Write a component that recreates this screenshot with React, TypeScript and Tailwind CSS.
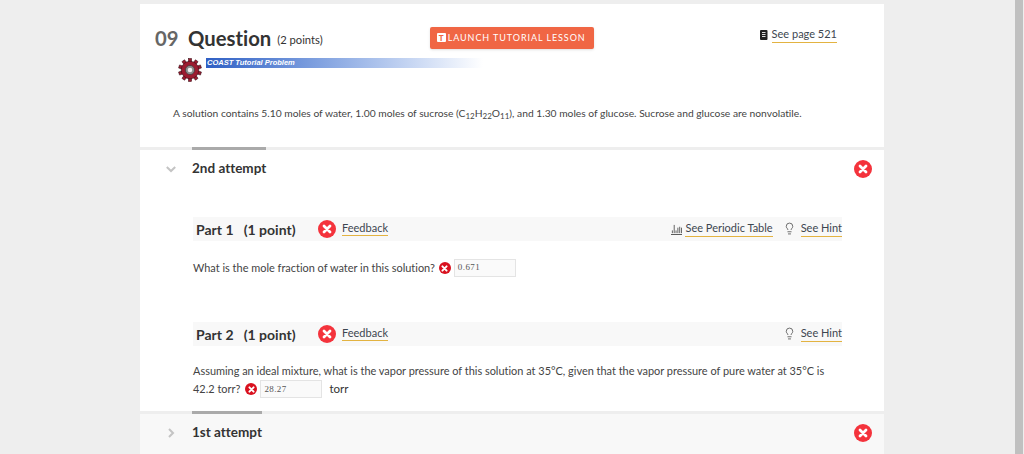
import React from 'react';
import { Lightbulb } from 'lucide-react';

const ErrorIcon = ({ size }: { size: 'lg' | 'sm' }) => (
    <span
        className={
            size === 'lg'
                ? 'flex h-[18px] w-[18px] shrink-0 items-center justify-center rounded-full bg-[#f4333c]'
                : 'flex h-3 w-3 shrink-0 items-center justify-center rounded-full bg-[#d9111f]'
        }
    >
        <svg viewBox="0 0 10 10" className={size === 'lg' ? 'h-[10px] w-[10px]' : 'h-[7px] w-[7px]'}>
            <path d="M2 2 L8 8 M8 2 L2 8" stroke="#fff" strokeWidth="2.8" strokeLinecap="round" />
        </svg>
    </span>
);

const Gear = () => (
    <svg viewBox="0 0 24 24" className="h-6 w-6 shrink-0">
        <g fill="#9c1c30" stroke="#2b0a10" strokeWidth="0.5">
            {[0, 36, 72, 108, 144, 180, 216, 252, 288, 324].map(a => (
                <rect key={a} x="10.4" y="0.5" width="3.2" height="5" transform={`rotate(${a} 12 12)`} />
            ))}
            <circle cx="12" cy="12" r="8.8" />
        </g>
        <circle cx="12" cy="12" r="4.6" fill="#8d8d8d" stroke="#333" strokeWidth="0.6" />
        <circle cx="12" cy="12" r="2.3" fill="#f2f2f2" />
    </svg>
);

const BookIcon = () => (
    <svg viewBox="0 0 8 10" className="h-[10px] w-2">
        <rect x="0" y="0" width="7.5" height="10" rx="1" fill="#222" />
        <path d="M2 2.5 H5.5 M2 4.5 H5.5 M2 6.5 H5.5" stroke="#ddd" strokeWidth="1" />
    </svg>
);

const BarsIcon = () => (
    <svg viewBox="0 0 12 12" className="h-[11px] w-[11px]">
        <path d="M0 11.5 H12" stroke="#444" strokeWidth="1" />
        <path d="M1.5 10 V7 M3.5 10 V1 M5.5 10 V7 M7.5 10 V4 M9.5 10 V3 M11.5 10 V4" stroke="#555" strokeWidth="1" />
    </svg>
);

const LinkText = ({ children }: { children: React.ReactNode }) => (
    <span className="border-b border-[#e3b341] pb-px text-[11px] leading-[14px] text-[#3d4650]">{children}</span>
);

const AnswerBox = ({ value }: { value: string }) => (
    <span className="ml-[3px] inline-flex h-[18px] w-[62px] items-center border border-[#e4e4e4] bg-[#fafafa] pl-[3px] font-['Liberation_Serif',serif] text-[9px] tracking-[0.4px] text-[#555]">
        {value}
    </span>
);

const PartHeader = ({ title, children }: { title: string; children: React.ReactNode }) => (
    <div className="flex h-6 items-center bg-[#f8f8f8] pl-[3px]">
        <span className="w-[122px] whitespace-pre text-[14px] font-bold text-[#333]">{title}</span>
        <ErrorIcon size="lg" />
        <span className="ml-[6px] -mt-[6px]">
            <LinkText>Feedback</LinkText>
        </span>
        <div className="ml-auto flex items-center">{children}</div>
    </div>
);

const HintLink = () => (
    <span className="flex items-center -mt-[1px]">
        <Lightbulb size={13} strokeWidth={1.4} className="mr-[5px] text-[#444]" />
        <LinkText>See Hint</LinkText>
    </span>
);

export default function App() {
    return (
        <div className="flex h-[454px] overflow-hidden bg-[#eeeeee] pt-[4px] font-['Lato','Open_Sans',sans-serif] [font-variant-ligatures:none]">
            <main className="ml-[140px] h-full w-[744px] shrink-0 bg-white">
                {/* Question header */}
                <section className="h-[143px] pl-[15px] pr-[47px] pt-[21px]">
                    <div className="flex h-[26px] items-center">
                        <span className="w-[33px] text-[20.3px] font-bold text-[#666]">09</span>
                        <span className="text-[20.3px] font-bold text-[#333]">Question</span>
                        <span className="ml-[6px] mt-[4px] text-[11.2px] text-[#333]">(2 points)</span>
                        <button className="ml-[107px] mt-[-1px] flex h-[22px] w-[164px] items-center rounded-[2px] bg-[#f06644] pl-[7px] text-[9px] tracking-[0.92px] text-white shadow-sm">
                            <span className="mr-[2px] flex h-[9px] w-[9px] items-center justify-center rounded-[1px] bg-white text-[8px] font-black leading-none tracking-normal text-[#f06644]">
                                T
                            </span>
                            LAUNCH TUTORIAL LESSON
                        </button>
                        <div className="ml-auto mb-[6px] flex items-center gap-[4px]">
                            <BookIcon />
                            <LinkText>See page 521</LinkText>
                        </div>
                    </div>
                    <div className="ml-[23px] mt-[7px] flex items-start">
                        <Gear />
                        <div className="ml-[4px] h-[10px] w-[277px] bg-gradient-to-r from-[#2f5fc4] to-white pl-[1px] font-['Liberation_Sans',sans-serif] text-[7.5px] font-bold italic leading-[9px] text-white">
                            COAST Tutorial Problem
                        </div>
                    </div>
                    <p className="ml-[18px] mt-[24px] whitespace-nowrap text-[10.27px] leading-[14px] text-[#444]">
                        A solution contains 5.10 moles of water, 1.00 moles of sucrose (C
                        <sub className="text-[8px]">12</sub>H<sub className="text-[8px]">22</sub>O
                        <sub className="text-[8px]">11</sub>), and 1.30 moles of glucose. Sucrose and glucose are
                        nonvolatile.
                    </p>
                </section>

                {/* 2nd attempt */}
                <section className="h-[264px] border-t-[3px] border-[#eeeeee]">
                    <div className="-mt-[3px] ml-[52px] h-[3px] w-[74px] bg-[#aaaaaa]" />
                    <div className="flex h-[37px] items-center pr-[12px]">
                        <span className="ml-[26px] w-[26px]">
                            <svg viewBox="0 0 10 10" className="h-[10px] w-[10px]">
                                <path d="M0.8 3 L5 7 L9.2 3" fill="none" stroke="#c4c4c4" strokeWidth="2" />
                            </svg>
                        </span>
                        <span className="text-[13.5px] font-bold text-[#333]">2nd attempt</span>
                        <span className="ml-auto mt-[1px]">
                            <ErrorIcon size="lg" />
                        </span>
                    </div>
                    <div className="ml-[53px] mr-[42px] mt-[30px]">
                        <PartHeader title="Part 1   (1 point)">
                            <span className="mr-[10px] flex items-center gap-[3px]">
                                <BarsIcon />
                                <LinkText>See Periodic Table</LinkText>
                            </span>
                            <HintLink />
                        </PartHeader>
                        <div className="mt-[18px] flex items-center text-[10.95px] text-[#444]">
                            What is the mole fraction of water in this solution?
                            <span className="ml-[4px]">
                                <ErrorIcon size="sm" />
                            </span>
                            <AnswerBox value="0.671" />
                        </div>
                        <div className="mt-[45px]">
                            <PartHeader title="Part 2   (1 point)">
                                <HintLink />
                            </PartHeader>
                        </div>
                        <div className="mt-[17px] text-[10.95px] leading-[16px] text-[#444]">
                            Assuming an ideal mixture, what is the vapor pressure of this solution at 35°C, given that the
                            vapor pressure of pure water at 35°C is
                            <div className="mt-px flex items-center">
                                42.2 torr?
                                <span className="ml-[5px]">
                                    <ErrorIcon size="sm" />
                                </span>
                                <AnswerBox value="28.27" />
                                <span className="ml-[7px] text-[11.5px] text-[#333]">torr</span>
                            </div>
                        </div>
                    </div>
                </section>

                {/* 1st attempt */}
                <section className="h-[43px] border-t-[3px] border-[#eeeeee] bg-[#f8f8f8] pr-[12px]">
                    <div className="-mt-[3px] ml-[52px] h-[3px] w-[70px] bg-[#aaaaaa]" />
                    <div className="flex h-[37px] items-center">
                        <span className="ml-[26px] w-[26px]">
                            <svg viewBox="0 0 10 10" className="h-[10px] w-[10px]">
                                <path d="M3 1 L7 5 L3 9" fill="none" stroke="#c4c4c4" strokeWidth="2" />
                            </svg>
                        </span>
                        <span className="text-[13.5px] font-bold text-[#333]">1st attempt</span>
                        <span className="ml-auto mt-[1px]">
                            <ErrorIcon size="lg" />
                        </span>
                    </div>
                </section>
            </main>
            {/* Scrollbar */}
            <div className="-mt-[4px] ml-[131px] h-[454px] w-2 bg-[#c0c0c0]" />
        </div>
    );
}
